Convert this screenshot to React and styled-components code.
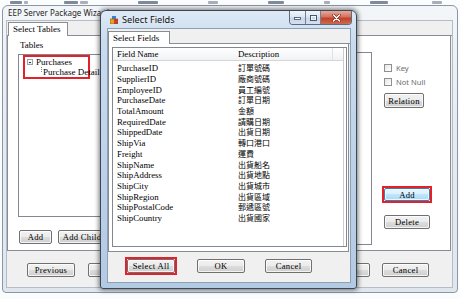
import React from 'react';
import styled, { createGlobalStyle } from 'styled-components';

const SERIF = `"Liberation Serif", "Noto Sans CJK TC", serif`;
const SANS = `"Noto Sans", "Open Sans", "Noto Sans CJK TC", sans-serif`;
const CJK = `"Noto Sans CJK TC", "Noto Sans CJK SC", sans-serif`;

const Global = createGlobalStyle`
  html, body { margin: 0; padding: 0; background: #fbfcfd; }
  body { width: 460px; height: 299px; overflow: hidden; font-family: ${SERIF}; }
  * { box-sizing: border-box; }
`;

const Stage = styled.div`
  position: relative;
  width: 460px;
  height: 299px;
  overflow: hidden;
`;

const TopStrip = styled.div`
  height: 5px;
  overflow: hidden;
  padding: 1px 0 0 10px;
  display: flex;
  gap: 0;
`;

const Smudge = styled.span`
  width: ${p => p.$w}px;
  margin-left: ${p => p.$ml}px;
  height: 3px;
  border-radius: 1px;
  background: #596578;
  opacity: ${p => p.$o || 0.7};
  filter: blur(0.7px);
  flex-shrink: 0;
`;

/* ---------- Outer wizard window ---------- */
const OuterWindow = styled.div`
  margin-left: 2px;
  width: 456px;
  height: 288px;
  border: 1px solid #8a97a6;
  border-radius: 6px 6px 4px 4px;
  background: linear-gradient(180deg, #f3f6f9 0%, #e6ecf2 40%, #dfe6ee 100%);
  padding: 0 4px 4px 3px;
  display: flex;
  flex-direction: column;
`;

const OuterTitle = styled.div`
  height: 14px;
  line-height: 14px;
  padding-left: 2px;
  font-family: ${SANS};
  font-size: 8px;
  color: #1e1e1e;
  white-space: nowrap;
`;

const Client = styled.div`
  flex: 1;
  background: #f0f0f0;
  border: 1px solid #b4bcc6;
  display: flex;
  flex-direction: column;
`;

const TabStrip = styled.div`
  height: ${p => p.$h}px;
  display: flex;
  align-items: flex-end;
  padding-left: ${p => p.$pl}px;
  border-bottom: 1px solid #898c95;
  flex-shrink: 0;
`;

const Tab = styled.div`
  width: ${p => p.$w}px;
  height: ${p => p.$h}px;
  margin-bottom: -1px;
  border: 1px solid #898c95;
  border-bottom: none;
  background: #fff;
  font-family: ${SERIF};
  font-size: 9px;
  line-height: ${p => p.$h - 1}px;
  padding-left: 4px;
  white-space: nowrap;
  color: #000;
`;

const TabPage = styled.div`
  height: 215px;
  background: #fff;
  border: 1px solid #898c95;
  border-top: none;
  margin: 0 1px 0 0;
  display: flex;
  flex-shrink: 0;
`;

const LeftCol = styled.div`
  margin-left: 10px;
  width: 90px;
  display: flex;
  flex-direction: column;
`;

const GroupLabel = styled.div`
  margin: 4px 0 0 2px;
  height: 10px;
  line-height: 10px;
  font-size: 9px;
  color: #000;
`;

const TreeBox = styled.div`
  margin-top: 4px;
  height: 163px;
  border: 1px solid #828790;
  background: #fff;
  padding-left: 4px;
  overflow: visible;
`;

const RedMark = styled.div`
  width: ${p => p.$w}px;
  height: ${p => p.$h}px;
  border: 2px solid #e2212b;
  display: flex;
  flex-direction: column;
  align-items: stretch;
`;

const TreeNode = styled.div`
  height: ${p => p.$h}px;
  display: flex;
  align-items: center;
  padding-left: ${p => p.$pl}px;
  font-size: 9px;
  white-space: nowrap;
  color: #000;
`;

const Expander = styled.span`
  width: 6px;
  height: 6px;
  border: 1px solid #9aa3ad;
  background: linear-gradient(#fff, #e8ecf0);
  display: inline-flex;
  align-items: center;
  justify-content: center;
  margin-right: 3px;
  &::after {
    content: '';
    width: 2px;
    height: 1px;
    background: #333;
  }
`;

const Connector = styled.span`
  width: 6px;
  height: 5px;
  margin-top: -5px;
  margin-right: 1px;
  border-left: 1px dotted #888;
  border-bottom: 1px dotted #888;
`;

const BtnRow = styled.div`
  display: flex;
  gap: ${p => p.$gap}px;
  margin-top: ${p => p.$mt || 0}px;
  padding-left: ${p => p.$pl || 0}px;
  align-items: center;
`;

const Btn = styled.div`
  width: ${p => p.$w}px;
  height: ${p => p.$h || 14}px;
  flex-shrink: 0;
  border: 1px solid ${p => (p.$def ? '#3c7fb1' : '#707070')};
  border-radius: 2px;
  background: ${p =>
    p.$def
      ? 'linear-gradient(#eaf6fd 0%, #d9f0fc 50%, #bee6fd 50%, #a7d9f5 100%)'
      : 'linear-gradient(#f2f2f2 0%, #ebebeb 50%, #dddddd 50%, #cfcfcf 100%)'};
  box-shadow: inset 0 0 0 1px rgba(255, 255, 255, 0.75);
  font-family: ${SERIF};
  font-size: 8.6px;
  letter-spacing: 0.3px;
  color: #000;
  display: flex;
  align-items: center;
  justify-content: center;
  white-space: nowrap;
  overflow: hidden;
  margin-left: ${p => p.$ml || 0}px;
  margin-top: ${p => p.$mt || 0}px;
`;

const HiddenGrid = styled.div`
  margin: 16px 0 0 4px;
  width: 260px;
  height: 193px;
  border: 1px solid #828790;
  background: #fff;
`;

const RightCol = styled.div`
  margin-left: 12px;
  width: 48px;
  display: flex;
  flex-direction: column;
`;

const CheckRow = styled.div`
  height: 10px;
  margin-top: ${p => p.$mt}px;
  display: flex;
  align-items: center;
  gap: 4px;
  font-family: ${SANS};
  font-size: 7.6px;
  color: #6d6d6d;
  white-space: nowrap;
`;

const CheckBox = styled.span`
  width: 8px;
  height: 8px;
  border: 1px solid #8f8f8f;
  background: linear-gradient(135deg, #e6e6e6, #fff);
  flex-shrink: 0;
`;

const RedWrap = styled.div`
  border: 2px solid #e2212b;
  width: fit-content;
  margin-left: ${p => p.$ml || 0}px;
  margin-top: ${p => p.$mt || 0}px;
  display: flex;
`;

const BottomBar = styled.div`
  flex: 1;
  display: flex;
  align-items: flex-start;
  padding: 12px 23px 0 20px;
`;

/* ---------- Select Fields dialog ---------- */
const Dialog = styled.div`
  position: absolute;
  left: 100px;
  top: 10px;
  width: 257px;
  height: 279px;
  border: 1px solid #3b4656;
  border-radius: 6px 6px 3px 3px;
  background: linear-gradient(180deg, #dde9f5 0%, #c9dbee 12%, #bcd1e8 60%, #b3cae3 100%);
  box-shadow: 0 0 5px 1px rgba(0, 0, 0, 0.55);
  padding: 0 5px 5px 6px;
  display: flex;
  flex-direction: column;
`;

const DlgTitle = styled.div`
  height: 17px;
  display: flex;
  align-items: flex-start;
  flex-shrink: 0;
`;

const DlgIcon = styled.svg`
  margin: 5px 0 0 3px;
  flex-shrink: 0;
`;

const DlgTitleText = styled.div`
  margin-left: 4px;
  height: 17px;
  line-height: 18px;
  font-family: ${SANS};
  font-size: 9.2px;
  color: #111;
  text-shadow: 0 0 4px rgba(255, 255, 255, 0.9);
  white-space: nowrap;
  flex: 1;
`;

const Controls = styled.div`
  display: flex;
  margin-right: -1px;
  border: 1px solid #5c6b80;
  border-top: none;
  border-radius: 0 0 4px 4px;
  overflow: hidden;
`;

const CtlBtn = styled.div`
  width: ${p => p.$w}px;
  height: 13px;
  display: flex;
  align-items: center;
  justify-content: center;
  border-left: ${p => (p.$first ? 'none' : '1px solid #6f8095')};
  background: ${p =>
    p.$close
      ? 'linear-gradient(180deg, #e9a99b 0%, #d2725c 45%, #c0412a 55%, #d2694d 100%)'
      : 'linear-gradient(180deg, #f1f5fa 0%, #dce6f2 45%, #c7d6e8 55%, #d3e0ee 100%)'};
`;

const DlgClient = styled.div`
  flex: 1;
  background: #f0f0f0;
  border: 1px solid #8ca0b6;
  display: flex;
  flex-direction: column;
`;

const DlgPanel = styled.div`
  height: 208px;
  background: #fff;
  border: 1px solid #898c95;
  border-top: none;
  margin-right: 1px;
  padding: 3px 1px 3px 3px;
  flex-shrink: 0;
`;

const Grid = styled.div`
  height: 200px;
  border: 1px solid #828790;
  background: #fff;
  box-shadow: inset -2px 0 0 #fff, inset -3px 0 0 #c9cdd2;
`;

const Cols = styled.div`
  display: grid;
  grid-template-columns: 120px 100px 1fr;
`;

const HeaderRow = styled(Cols)`
  height: 13px;
  background: linear-gradient(#ffffff, #f1f2f4);
  border-bottom: 1px solid #d5d5d5;
  margin-right: 3px;
`;

const HeadCell = styled.div`
  font-family: ${SERIF};
  font-size: 8.8px;
  line-height: 12px;
  padding-left: ${p => p.$pl}px;
  border-right: ${p => (p.$sep ? '1px solid #e0e2e5' : 'none')};
  white-space: nowrap;
  color: #000;
`;

const Rows = styled.div`
  padding-top: 2px;
`;

const Row = styled(Cols)`
  height: 10.7px;
  align-items: center;
`;

const NameCell = styled.div`
  font-family: ${SERIF};
  font-size: 8.8px;
  line-height: 10px;
  padding-left: 4px;
  color: #000;
  white-space: nowrap;
`;

const DescCell = styled.div`
  font-family: ${CJK};
  font-size: 8px;
  line-height: 10px;
  padding-left: 5px;
  color: #000;
  white-space: nowrap;
`;

const DlgButtons = styled.div`
  flex: 1;
  display: flex;
  align-items: center;
  gap: 20px;
  padding: 0 0 2px 17px;
`;

const fields = [
  ['PurchaseID', '訂單號碼'],
  ['SupplierID', '廠商號碼'],
  ['EmployeeID', '員工編號'],
  ['PurchaseDate', '訂單日期'],
  ['TotalAmount', '金額'],
  ['RequiredDate', '請購日期'],
  ['ShippedDate', '出貨日期'],
  ['ShipVia', '轉口港口'],
  ['Freight', '運費'],
  ['ShipName', '出貨船名'],
  ['ShipAddress', '出貨地點'],
  ['ShipCity', '出貨城市'],
  ['ShipRegion', '出貨區域'],
  ['ShipPostalCode', '郵遞區號'],
  ['ShipCountry', '出貨國家'],
];

const smudges = [
  [12, 0], [4, 2], [14, 36], [8, 2], [20, 50], [10, 50], [16, 50],
  [6, 40], [18, 40], [10, 44], [14, 38], [8, 30], [12, 20],
];

export default function App() {
  return (
    <Stage>
      <Global />
      <TopStrip>
        {smudges.map(([w, ml], i) => (
          <Smudge key={i} $w={w} $ml={ml} $o={i % 2 ? 0.5 : 0.75} />
        ))}
      </TopStrip>

      <OuterWindow>
        <OuterTitle>EEP Server Package Wizard</OuterTitle>
        <Client>
          <TabStrip $h={15} $pl={1}>
            <Tab $w={60} $h={14}>Select Tables</Tab>
          </TabStrip>
          <TabPage>
            <LeftCol>
              <GroupLabel>Tables</GroupLabel>
              <TreeBox>
                <RedMark $w={67} $h={24}>
                  <TreeNode $h={10} $pl={2}>
                    <Expander />
                    Purchases
                  </TreeNode>
                  <TreeNode $h={9} $pl={16}>
                    <Connector />
                    Purchase Detail
                  </TreeNode>
                </RedMark>
              </TreeBox>
              <BtnRow $gap={6} $mt={13} $pl={1}>
                <Btn $w={33}>Add</Btn>
                <Btn $w={48}>Add Child</Btn>
              </BtnRow>
            </LeftCol>

            <HiddenGrid />

            <RightCol>
              <CheckRow $mt={27}>
                <CheckBox />
                Key
              </CheckRow>
              <CheckRow $mt={4}>
                <CheckBox />
                Not Null
              </CheckRow>
              <Btn $w={40} $h={15} $mt={6}>Relation</Btn>
              <RedWrap $ml={-2} $mt={78}>
                <Btn $w={46} $h={13} $def>Add</Btn>
              </RedWrap>
              <Btn $w={46} $h={14} $mt={12}>Delete</Btn>
            </RightCol>
          </TabPage>
          <BottomBar>
            <Btn $w={48}>Previous</Btn>
            <Btn $w={48} $ml={13}>Next</Btn>
            <Btn $w={48} $ml={186}>Finish</Btn>
            <Btn $w={47} $ml={12}>Cancel</Btn>
          </BottomBar>
        </Client>
      </OuterWindow>

      <Dialog>
        <DlgTitle>
          <DlgIcon width="8" height="8" viewBox="0 0 8 8">
            <rect x="0" y="3" width="4" height="5" fill="#e8a317" />
            <rect x="4" y="3" width="4" height="5" fill="#d23a2a" />
            <rect x="2" y="0" width="4" height="3" fill="#3d7fd1" />
            <rect x="0" y="3" width="8" height="5" fill="none" stroke="#7a5a20" strokeWidth="0.6" />
          </DlgIcon>
          <DlgTitleText>Select Fields</DlgTitleText>
          <Controls>
            <CtlBtn $w={15} $first>
              <svg width="7" height="5" viewBox="0 0 7 5">
                <rect x="0.5" y="2.5" width="6" height="2" fill="#fff" stroke="#3a4a5e" strokeWidth="0.8" />
              </svg>
            </CtlBtn>
            <CtlBtn $w={15}>
              <svg width="7" height="6" viewBox="0 0 7 6">
                <rect x="0.5" y="0.5" width="6" height="5" fill="none" stroke="#3a4a5e" strokeWidth="0.9" />
                <rect x="1.3" y="1.6" width="4.4" height="3.1" fill="none" stroke="#fff" strokeWidth="0.6" />
              </svg>
            </CtlBtn>
            <CtlBtn $w={31} $close>
              <svg width="9" height="8" viewBox="0 0 9 8">
                <path d="M1.5 1 L7.5 7 M7.5 1 L1.5 7" stroke="#6b1d12" strokeWidth="2.6" strokeLinecap="round" />
                <path d="M1.5 1 L7.5 7 M7.5 1 L1.5 7" stroke="#fff" strokeWidth="1.6" strokeLinecap="round" />
              </svg>
            </CtlBtn>
          </Controls>
        </DlgTitle>

        <DlgClient>
          <TabStrip $h={15} $pl={0}>
            <Tab $w={62} $h={13}>Select Fields</Tab>
          </TabStrip>
          <DlgPanel>
            <Grid>
              <HeaderRow>
                <HeadCell $pl={4}>Field Name</HeadCell>
                <HeadCell $pl={5} $sep>Description</HeadCell>
                <HeadCell $pl={0} />
              </HeaderRow>
              <Rows>
                {fields.map(([n, d]) => (
                  <Row key={n}>
                    <NameCell>{n}</NameCell>
                    <DescCell>{d}</DescCell>
                    <div />
                  </Row>
                ))}
              </Rows>
            </Grid>
          </DlgPanel>
          <DlgButtons>
            <RedWrap>
              <Btn $w={48} $h={14}>Select All</Btn>
            </RedWrap>
            <Btn $w={48} $h={14}>OK</Btn>
            <Btn $w={47} $h={14}>Cancel</Btn>
          </DlgButtons>
        </DlgClient>
      </Dialog>
    </Stage>
  );
}
